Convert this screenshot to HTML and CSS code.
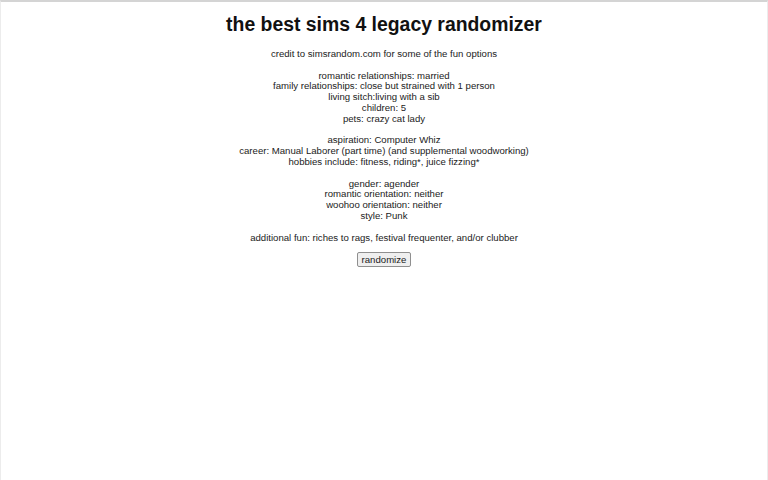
FILE: index.html
```html
<!DOCTYPE html>
<html lang="en">
<head>
  <meta charset="UTF-8" />
  <meta name="viewport" content="width=device-width, initial-scale=1.0"/>
  <title>the best sims 4 legacy randomizer</title>
  <link rel="stylesheet" href="styles.css">
</head>
<body>
  <div class="frame">
    <h1>the best sims 4 legacy randomizer</h1>
    <p>credit to simsrandom.com for some of the fun options</p>

    <p>
      romantic relationships: <span id="romance">married</span><br>
      family relationships: <span id="family">close but strained with 1 person</span><br>
      living sitch:<span id="living">living with a sib</span><br>
      children: <span id="children">5</span><br>
      pets: <span id="pets">crazy cat lady</span>
    </p>

    <p>
      aspiration: <span id="aspiration">Computer Whiz</span><br>
      career: <span id="career">Manual Laborer (part time) (and supplemental woodworking)</span><br>
      hobbies include: <span id="hobbies">fitness, riding*, juice fizzing*</span>
    </p>

    <p>
      gender: <span id="gender">agender</span><br>
      romantic orientation: <span id="romOrient">neither</span><br>
      woohoo orientation: <span id="wooOrient">neither</span><br>
      style: <span id="style">Punk</span>
    </p>

    <p class="last">additional fun: <span id="fun">riches to rags, festival frequenter, and/or clubber</span></p>

    <button class="randomize" onclick="randomize()">randomize</button>
  </div>
</body>
</html>
```

FILE: styles.css
```css
* {
  box-sizing: border-box;
}

html, body {
  margin: 0;
  height: 100%;
}

body {
  font-family: 'Liberation Sans', Arial, sans-serif;
  color: #222;
  background: #fff;
}

.frame {
  height: 100%;
  border-top: 2px solid #d4d4d4;
  border-left: 1px solid #ececec;
  border-right: 1px solid #ececec;
  text-align: center;
  font-size: 9.6px;
  line-height: 10.8px;
  padding-top: 10px;
}

h1 {
  font-size: 19.4px;
  line-height: 24px;
  color: #111;
  margin: 0 0 13px;
}

p {
  margin: 0 0 10.8px;
}

p.last {
  margin-bottom: 9px;
}

.randomize {
  font-family: 'Liberation Sans', Arial, sans-serif;
  font-size: 9.6px;
  padding: 1px 4px;
  color: #222;
  background: #efefef;
  border: 1px solid #8f8f8f;
  border-radius: 2px;
}
```
